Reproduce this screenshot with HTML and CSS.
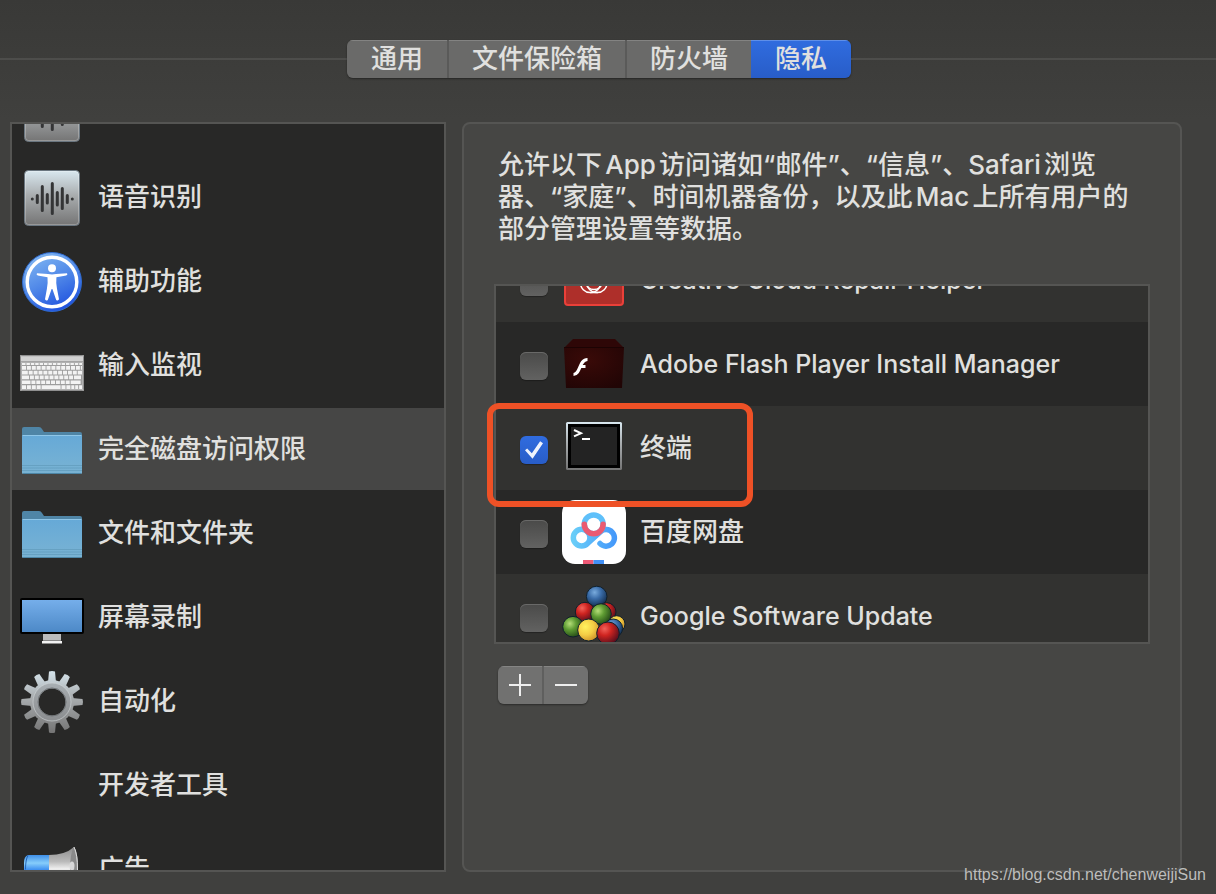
FILE: index.html
```
<!DOCTYPE html>
<html lang="zh-CN">
<head>
    <meta charset="UTF-8">
    <meta name="viewport" content="width=device-width, initial-scale=1.0">
    <title>安全性与隐私</title>
    <link rel="stylesheet" href="styles.css">
</head>
<body>
    <!-- shared gradients and repeated icons -->
    <svg class="defs" width="0" height="0" aria-hidden="true">
        <defs>
            <linearGradient id="silver" x1="0" y1="0" x2="0" y2="1">
                <stop offset="0" stop-color="#d9e8f0"/>
                <stop offset="0.45" stop-color="#a9adaf"/>
                <stop offset="1" stop-color="#747474"/>
            </linearGradient>
            <linearGradient id="folderFront" x1="0" y1="0" x2="0" y2="1">
                <stop offset="0" stop-color="#66a9d7"/>
                <stop offset="1" stop-color="#79b3d3"/>
            </linearGradient>
            <linearGradient id="accessBlue" x1="0.2" y1="0" x2="0.7" y2="1">
                <stop offset="0" stop-color="#83b9f3"/>
                <stop offset="0.5" stop-color="#5088e8"/>
                <stop offset="1" stop-color="#1c4ede"/>
            </linearGradient>
            <linearGradient id="screenBlue" x1="0" y1="0" x2="0" y2="1">
                <stop offset="0" stop-color="#75aeea"/>
                <stop offset="1" stop-color="#4d89c7"/>
            </linearGradient>
            <linearGradient id="hornBlue" x1="0" y1="0" x2="0" y2="1">
                <stop offset="0" stop-color="#3f8fe8"/>
                <stop offset="0.3" stop-color="#86cdfb"/>
                <stop offset="0.55" stop-color="#3d8ff0"/>
                <stop offset="1" stop-color="#1c55b8"/>
            </linearGradient>
            <linearGradient id="hornGrey" x1="0" y1="0" x2="0" y2="1">
                <stop offset="0" stop-color="#8c8c8c"/>
                <stop offset="0.3" stop-color="#b9b9b9"/>
                <stop offset="0.45" stop-color="#ededed"/>
                <stop offset="1" stop-color="#8c8c8c"/>
            </linearGradient>
            <linearGradient id="panBlue" x1="0" y1="0" x2="1" y2="0">
                <stop offset="0" stop-color="#69cdf8"/>
                <stop offset="1" stop-color="#4599fa"/>
            </linearGradient>
            <radialGradient id="flashRed" cx="0.4" cy="0.3" r="0.8">
                <stop offset="0" stop-color="#3a0a08"/>
                <stop offset="1" stop-color="#210505"/>
            </radialGradient>
            <radialGradient id="ballBlue" cx="0.4" cy="0.3" r="0.7">
                <stop offset="0" stop-color="#79abdd"/>
                <stop offset="0.45" stop-color="#3a6ca8"/>
                <stop offset="1" stop-color="#142f50"/>
            </radialGradient>
            <radialGradient id="ballRed" cx="0.35" cy="0.3" r="0.75">
                <stop offset="0" stop-color="#f2625a"/>
                <stop offset="0.4" stop-color="#cf2420"/>
                <stop offset="1" stop-color="#4e0c1c"/>
            </radialGradient>
            <radialGradient id="ballGreen" cx="0.35" cy="0.35" r="0.75">
                <stop offset="0" stop-color="#b4dd78"/>
                <stop offset="0.4" stop-color="#5f9c33"/>
                <stop offset="1" stop-color="#1d3f13"/>
            </radialGradient>
            <radialGradient id="ballYellow" cx="0.35" cy="0.35" r="0.75">
                <stop offset="0" stop-color="#fff25e"/>
                <stop offset="0.5" stop-color="#f4cd45"/>
                <stop offset="1" stop-color="#c98a25"/>
            </radialGradient>
            <mask id="gearShape">
                <g fill="#fff">
                    <circle cx="32" cy="33" r="22"/>
                    <g id="teeth">
                        <path id="tooth" d="M28 13 L29 2.500 Q32 1.500 35 2.500 L36 13 Z"/>
                        <use href="#tooth" transform="rotate(30 32 33)"/>
                        <use href="#tooth" transform="rotate(60 32 33)"/>
                    </g>
                    <use href="#teeth" transform="rotate(90 32 33)"/>
                    <use href="#teeth" transform="rotate(180 32 33)"/>
                    <use href="#teeth" transform="rotate(270 32 33)"/>
                </g>
                <circle cx="32" cy="33" r="13.500" fill="#000"/>
            </mask>
            <symbol id="icon-wave" viewBox="0 0 64 64">
                <rect x="4.500" y="5.500" width="55" height="55" rx="4" fill="url(#silver)" stroke="#6a7680"/>
                <rect x="5.500" y="6.500" width="53" height="53" rx="3" fill="none" stroke="#fff" stroke-opacity="0.25"/>
                <path d="M12.300 33.900v.1M17.300 30.500v7M22.300 21.500v24M27.300 29.500v8.500M32.300 18.500v30M37.300 27.500v12.500M42.300 23.500v20M47.300 30.500v7M52.300 33.900v.1" fill="none" stroke="#343536" stroke-width="3" stroke-linecap="round"/>
            </symbol>
            <symbol id="icon-folder" viewBox="0 0 64 64">
                <path d="M2 20V12q0-2 2-2H19q2 0 3 2l2 3H60q2 0 2 2v4z" fill="#4f85a6"/>
                <rect x="2" y="18" width="60" height="39" rx="1.500" fill="url(#folderFront)"/>
                <path d="M2.500 18.500h59" stroke="#8fc6e8"/>
                <path d="M2 48.500h60M2 51h60M2 53.500h60" stroke="#5f9abb" stroke-opacity="0.7"/>
                <path d="M3 56.500h58" stroke="#4d86a6"/>
            </symbol>
        </defs>
    </svg>

    <header class="tab-bar">
        <nav class="tabs">
            <button type="button">通用</button>
            <button type="button">文件保险箱</button>
            <button type="button">防火墙</button>
            <button type="button" class="active">隐私</button>
        </nav>
    </header>

    <main class="content">
        <aside class="sidebar">
            <ul class="categories">
                <li>
                    <svg class="icon" viewBox="0 0 64 64" aria-hidden="true"><use href="#icon-wave"/></svg>
                </li>
                <li>
                    <svg class="icon" viewBox="0 0 64 64" aria-hidden="true"><use href="#icon-wave"/></svg>
                    <span>语音识别</span>
                </li>
                <li>
                    <svg class="icon" viewBox="0 0 64 64" aria-hidden="true">
                        <circle cx="32" cy="33" r="29.500" fill="url(#accessBlue)" stroke="#2f6bd0"/>
                        <circle cx="32" cy="33" r="24.800" fill="none" stroke="#fff" stroke-width="3.400"/>
                        <circle cx="32" cy="19.300" r="4" fill="#fff"/>
                        <path d="M17 24.200q-1.200 1.600.8 2.200l9.700 1.800q.6 6-.6 11.500L25 50.300q.8 1.900 2.800.6L31.600 40h.8l3.800 10.900q2 1.300 2.800-.6L37 39.700q-1.200-5.500-.6-11.500l9.800-1.800q2-.6.8-2.200L36 25q-4 .8-8 0z" fill="#fff"/>
                    </svg>
                    <span>辅助功能</span>
                </li>
                <li>
                    <svg class="icon" viewBox="0 0 64 64" aria-hidden="true">
                        <rect x="0" y="22" width="64" height="36" rx="1" fill="#c4c4c4"/>
                        <rect x="0.500" y="22.500" width="63" height="35" rx="1" fill="none" stroke="#8f8f8f"/>
                        <path d="M1 24h62v4H1z" fill="#d2d2d2"/>
                        <path d="M1 28.500h62" stroke="#a5a5a5"/>
                        <rect x="1.500" y="29.500" width="61" height="27" fill="#9d9d9d"/>
                        <g stroke="#f3f3f3" fill="none">
                            <path d="M2 31h60" stroke-width="2" stroke-dasharray="3.500 .9"/>
                            <path d="M2 34.800h60" stroke-width="3.800" stroke-dasharray="4 .9"/>
                            <path d="M2 39.700h60" stroke-width="3.800" stroke-dasharray="5.800 .9 4 .9 4 .9 4 .9 4 .9 4 .9 4 .9 4 .9 4 .9 4 .9 4 .9"/>
                            <path d="M2 44.400h60" stroke-width="3.800" stroke-dasharray="7 .9 4 .9 4 .9 4 .9 4 .9 4 .9 4 .9 4 .9 4 .9 4 .9 7"/>
                            <path d="M2 49.200h60" stroke-width="3.600" stroke-dasharray="8.500 .9 4 .9 4 .9 4 .9 4 .9 4 .9 4 .9 4 .9 4 .9 10"/>
                            <path d="M2 54.200h60" stroke-width="3.800" stroke-dasharray="4 .9 4 .9 4 .9 4 .9 19 .9 4 .9 4 .9 3 .9 3 .9 4"/>
                        </g>
                    </svg>
                    <span>输入监视</span>
                </li>
                <li class="selected">
                    <svg class="icon" viewBox="0 0 64 64" aria-hidden="true"><use href="#icon-folder"/></svg>
                    <span>完全磁盘访问权限</span>
                </li>
                <li>
                    <svg class="icon" viewBox="0 0 64 64" aria-hidden="true"><use href="#icon-folder"/></svg>
                    <span>文件和文件夹</span>
                </li>
                <li>
                    <svg class="icon" viewBox="0 0 64 64" aria-hidden="true">
                        <rect x="0" y="13" width="64" height="36" rx="2" fill="#000"/>
                        <rect x="2" y="15" width="60" height="32" fill="url(#screenBlue)"/>
                        <path d="M23 49h18v7H23z" fill="#bcbcbc"/>
                        <path d="M23 55h18v1H23z" fill="#888"/>
                        <path d="M22 56h20v2.500H22z" fill="#f2f2f2"/>
                    </svg>
                    <span>屏幕录制</span>
                </li>
                <li>
                    <svg class="icon" viewBox="0 0 64 64" aria-hidden="true">
                        <rect width="64" height="64" fill="url(#silver)" mask="url(#gearShape)"/>
                        <circle cx="32" cy="33" r="16.500" fill="none" stroke="#8f9497" stroke-width="5" stroke-opacity="0.5"/>
                        <circle cx="32" cy="33" r="19" fill="none" stroke="#d4d8da" stroke-opacity="0.6"/>
                        <circle cx="32" cy="33" r="14" fill="none" stroke="#6e7275"/>
                    </svg>
                    <span>自动化</span>
                </li>
                <li>
                    <div class="icon"></div>
                    <span>开发者工具</span>
                </li>
                <li>
                    <svg class="icon" viewBox="0 0 64 64" aria-hidden="true">
                        <path d="M29 18H8q-4 1-4 8v10q0 8 4 9H29z" fill="url(#hornBlue)"/>
                        <path d="M8 18.500q-2.500 4-2.500 14" fill="none" stroke="#2463b4"/>
                        <path d="M29 18Q45 18 54 10q4 5 4 22T54 58Q45 46 29 45z" fill="url(#hornGrey)"/>
                        <path d="M54 10q4 5 4 22t-4 26q-4-8-4-25t4-23z" fill="#8a8a8a"/>
                        <path d="M54 10q3.500 7 3.500 23" fill="none" stroke="#dedede"/>
                        <ellipse cx="52" cy="29" rx="2.500" ry="4.500" fill="#d8d8d8"/>
                    </svg>
                    <span>广告</span>
                </li>
            </ul>
        </aside>

        <section class="panel">
            <p class="description">允许以下App访问诸如“邮件”、“信息”、Safari浏览<br>器、“家庭”、时间机器备份，以及此Mac上所有用户的<br>部分管理设置等数据。</p>

            <div class="apps">
                <div class="app-list">
                    <ul>
                        <li>
                            <input type="checkbox" id="app-cc">
                            <label for="app-cc">
                                <svg class="icon" viewBox="0 0 64 64" aria-hidden="true">
                                    <rect x="3" y="9" width="58" height="48" rx="3" fill="#ae2f2a" stroke="#ea4039" stroke-width="2"/>
                                    <rect x="18.500" y="25" width="20" height="19.500" rx="9.500" fill="none" stroke="#fff" stroke-width="1.500"/>
                                    <rect x="25" y="25" width="20" height="19.500" rx="9.500" fill="none" stroke="#fff" stroke-width="1.500"/>
                                    <path d="M28 44.500h8" stroke="#fff" stroke-width="1.500"/>
                                    <ellipse cx="32" cy="34.500" rx="8" ry="7" fill="none" stroke="#fff" stroke-width="1.500"/>
                                </svg>
                                <span class="latin">Creative Cloud Repair Helper</span>
                            </label>
                        </li>
                        <li>
                            <input type="checkbox" id="app-flash">
                            <label for="app-flash">
                                <svg class="icon" viewBox="0 0 64 64" aria-hidden="true">
                                    <path d="M11 7h42l9 9H2z" fill="#2e0707"/>
                                    <path d="M2 15.500h60L60 56H4z" fill="url(#flashRed)"/>
                                    <path d="M2 15.500h60" stroke="#1c0303"/>
                                    <path d="M11.500 42.500c7 0 5.500-15 14-15M17.500 34.500h6" fill="none" stroke="#fff" stroke-width="3.200"/>
                                </svg>
                                <span class="latin">Adobe Flash Player Install Manager</span>
                            </label>
                        </li>
                        <li>
                            <input type="checkbox" id="app-terminal" checked>
                            <label for="app-terminal">
                                <svg class="icon" viewBox="0 0 64 64" aria-hidden="true">
                                    <rect x="4" y="6" width="56" height="48" rx="1.500" fill="url(#silver)"/>
                                    <rect x="6" y="8" width="52" height="44" fill="#000"/>
                                    <rect x="9" y="11" width="46" height="38" fill="#232323"/>
                                    <path d="M12 14l7 3.200-7 3.200" fill="none" stroke="#fff" stroke-width="2"/>
                                    <path d="M20 23h8" stroke="#fff" stroke-width="2"/>
                                </svg>
                                <span>终端</span>
                            </label>
                        </li>
                        <li>
                            <input type="checkbox" id="app-baidu">
                            <label for="app-baidu">
                                <svg class="icon" viewBox="0 0 64 64" aria-hidden="true">
                                    <rect width="64" height="64" rx="13" fill="#fff"/>
                                    <path d="M21 60h10.500v4H21z" fill="#ee5a76"/>
                                    <path d="M31.500 60H42v4H31.500z" fill="#4190f7"/>
                                    <g fill="none" stroke-width="5.500">
                                        <path d="M25.500 43.500A8.300 8.300 0 1 1 25.500 31.800M25.500 31.800A8.300 8.300 0 0 1 25.500 43.500L38.500 31.800A8.300 8.300 0 1 1 38 43.500" stroke="url(#panBlue)" stroke-linecap="round"/>
                                        <circle cx="31.700" cy="24.300" r="9.400" stroke="#5fc0fa"/>
                                        <path d="M22.300 24.300a9.400 9.400 0 0 0 18.800 0" stroke="#ea5a72" stroke-linecap="round"/>
                                    </g>
                                </svg>
                                <span>百度网盘</span>
                            </label>
                        </li>
                        <li>
                            <input type="checkbox" id="app-google">
                            <label for="app-google">
                                <svg class="icon" viewBox="0 0 64 64" aria-hidden="true">
                                    <g stroke="#10202c">
                                        <circle cx="34.700" cy="12.500" r="10.300" fill="url(#ballBlue)"/>
                                        <circle cx="44.700" cy="28" r="9.300" fill="url(#ballRed)"/>
                                        <circle cx="23" cy="28" r="9.700" fill="url(#ballRed)"/>
                                        <circle cx="39" cy="30" r="10.300" fill="url(#ballGreen)"/>
                                        <circle cx="11" cy="42.700" r="10.300" fill="url(#ballGreen)"/>
                                        <circle cx="54.700" cy="40" r="8.300" fill="url(#ballYellow)"/>
                                        <circle cx="51.300" cy="44.300" r="9.300" fill="url(#ballBlue)"/>
                                        <circle cx="26.700" cy="46" r="11" fill="url(#ballYellow)"/>
                                        <circle cx="46" cy="49.300" r="11.300" fill="url(#ballRed)"/>
                                    </g>
                                </svg>
                                <span class="latin">Google Software Update</span>
                            </label>
                        </li>
                    </ul>
                </div>
                <div class="highlight"></div>
            </div>

            <div class="add-remove">
                <button type="button" aria-label="添加">
                    <svg width="22" height="22" viewBox="0 0 22 22"><path d="M11 0v22M0 11h22" stroke="#eee" stroke-width="2"/></svg>
                </button>
                <button type="button" aria-label="移除">
                    <svg width="22" height="22" viewBox="0 0 22 22"><path d="M0 11h22" stroke="#eee" stroke-width="2"/></svg>
                </button>
            </div>
        </section>
    </main>

    <div class="watermark">https://blog.csdn.net/chenweijiSun</div>
</body>
</html>
```
FILE: styles.css
```
* {
    margin: 0;
    padding: 0;
    box-sizing: border-box;
}

body {
    position: relative;
    display: flex;
    flex-direction: column;
    height: 100vh;
    overflow: hidden;
    font-family: Inter, "Noto Sans CJK SC", sans-serif;
    font-size: 26px;
    font-weight: 500;
    line-height: 32px;
    color: #e0e0df;
    background: linear-gradient(#393937, #40403e 120px);
}

ul {
    list-style: none;
}

button {
    font: inherit;
    color: inherit;
    border: none;
}

.defs {
    position: absolute;
}

.icon {
    flex: none;
    display: block;
    width: 64px;
    height: 64px;
}

/* tabs, with a rule running out to both sides */
.tab-bar {
    display: flex;
    align-items: center;
    padding-top: 40px;
}

.tab-bar::before,
.tab-bar::after {
    content: "";
    flex: 348;
    height: 2px;
    background: #4d4d4b;
}

.tab-bar::after {
    flex: 366;
}

.tabs {
    display: flex;
    border-radius: 6px;
    overflow: hidden;
    box-shadow: 0 1px 2px rgba(0,0,0,0.4);
}

.tabs button {
    height: 38px;
    padding: 0 23px;
    background: #6a6a69;
    border-right: 2px solid #5a5a59;
    box-shadow: inset 0 1px 0 #838382;
    white-space: nowrap;
}

.tabs button:first-child,
.tabs button:last-child {
    padding: 0 24px;
}

.tabs button:nth-last-child(2),
.tabs button:last-child {
    border-right: none;
}

.tabs button.active {
    background: linear-gradient(#306cdf, #285dc8);
    box-shadow: inset 0 1px 0 #5f8fe8;
}

.content {
    flex: 1;
    min-height: 0;
    display: grid;
    grid-template-columns: 436fr 720fr;
    gap: 16px;
    padding: 44px 34px 22px 10px;
}

.sidebar {
    min-height: 0;
    overflow: hidden;
    background: #282827;
    border: 2px solid #555553;
}

/* list is scrolled part of the way down */
.categories {
    margin-top: -52px;
}

.categories li {
    display: flex;
    align-items: center;
    gap: 14px;
    height: 84px;
    padding-left: 8px;
    border-bottom: 2px solid #282827;
}

.categories li.selected {
    background: #464645;
}

.panel {
    min-height: 0;
    padding: 25px 30px;
    background: #464644;
    border: 2px solid #555553;
    border-radius: 8px;
}

.description {
    margin: 0 4px 39px;
    text-autospace: normal;
}

.apps {
    position: relative;
}

.app-list {
    height: 360px;
    overflow: hidden;
    background: #282827;
    border: 2px solid #555553;
}

.app-list ul {
    margin-top: -48px;
}

.app-list li {
    display: flex;
    align-items: center;
    gap: 14px;
    height: 84px;
    padding-left: 24px;
}

.app-list li:nth-child(odd) {
    background: #323230;
}

.app-list label {
    display: flex;
    align-items: center;
    gap: 14px;
    white-space: nowrap;
}

.latin {
    font-size: 25px;
}

.app-list input {
    appearance: none;
    flex: none;
    width: 28px;
    height: 28px;
    margin-top: 4px;
    border-radius: 6px;
    background: linear-gradient(#4a4a49, #626261);
    box-shadow: inset 0 1px 0 #696968, 0 1px 1px rgba(0,0,0,0.3);
}

.app-list input:checked {
    display: grid;
    place-items: center;
    background: linear-gradient(#306cdf, #285dc8);
    box-shadow: 0 1px 1px rgba(0,0,0,0.3);
}

.app-list input:checked::before {
    content: "";
    width: 18px;
    height: 18px;
    background: #eef3fd;
    clip-path: polygon(0 52%, 12% 42%, 38% 68%, 84% 2%, 100% 12%, 42% 98%);
}

/* marker drawn round the terminal row */
.highlight {
    position: absolute;
    top: 119px;
    left: -7px;
    width: 266px;
    height: 104px;
    border: 6px solid #ee5126;
    border-radius: 12px;
    pointer-events: none;
}

.add-remove {
    display: inline-flex;
    margin: 22px 4px 0;
    border-radius: 6px;
    overflow: hidden;
    box-shadow: 0 1px 2px rgba(0,0,0,0.4);
}

.add-remove button {
    display: flex;
    align-items: center;
    justify-content: center;
    width: 44px;
    height: 38px;
    background: #717170;
    box-shadow: inset 0 1px 0 #858584;
}

.add-remove button:first-child {
    width: 46px;
    border-right: 2px solid #5f5f5e;
}

.watermark {
    position: absolute;
    right: 10px;
    bottom: 8px;
    font-family: "Liberation Sans", Arial, sans-serif;
    font-size: 16px;
    font-weight: 400;
    line-height: 22px;
    color: #bdbdbc;
}
```
